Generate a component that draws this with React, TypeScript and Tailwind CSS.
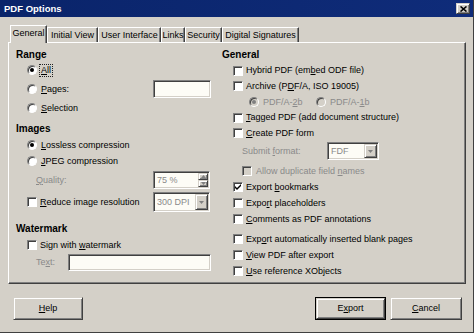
import React from "react";

function Radio({ on, disabled }: { on?: boolean; disabled?: boolean }) {
  return (
    <span
      className={`inline-flex w-[10px] h-[10px] rounded-full shrink-0 items-center justify-center border border-t-[#808080] border-l-[#808080] border-r-white border-b-white shadow-[inset_1px_1px_0_#404040] ${
        disabled ? "bg-[#d4d0c8]" : "bg-white"
      }`}
    >
      {on && (
        <span className={`w-[4px] h-[4px] rounded-full ${disabled ? "bg-[#808080]" : "bg-black"}`} />
      )}
    </span>
  );
}

function Check({ on, disabled }: { on?: boolean; disabled?: boolean }) {
  return (
    <span
      className={`inline-flex w-[10px] h-[10px] shrink-0 items-center justify-center border border-t-[#808080] border-l-[#808080] border-r-white border-b-white shadow-[inset_1px_1px_0_#404040] ${
        disabled ? "bg-[#d4d0c8]" : "bg-white"
      }`}
    >
      {on && (
        <svg width="7" height="7" viewBox="0 0 7 7" className="ml-[1px] mt-[1px]">
          <path d="M0 2 L2 4 L6 0 L6 2 L2 6 L0 4 Z" fill="black" />
        </svg>
      )}
    </span>
  );
}

function Arrow({ gray }: { gray?: boolean }) {
  return (
    <svg width="5" height="3" viewBox="0 0 5 3">
      <path d="M0 0 L5 0 L2.5 3 Z" fill={gray ? "#808080" : "black"} />
    </svg>
  );
}

function Raised({ className, children }: { className: string; children?: React.ReactNode }) {
  return (
    <div
      className={`flex items-center justify-center bg-[#d4d0c8] border border-t-[#d4d0c8] border-l-[#d4d0c8] border-r-[#404040] border-b-[#404040] shadow-[inset_1px_1px_0_#ffffff,inset_-1px_-1px_0_#808080] ${className}`}
    >
      {children}
    </div>
  );
}

function Sunken({ className, children }: { className: string; children?: React.ReactNode }) {
  return (
    <div
      className={`flex items-stretch bg-[#fdfcf6] border border-t-[#808080] border-l-[#808080] border-r-white border-b-white shadow-[inset_1px_1px_0_#404040,inset_-1px_-1px_0_#d4d0c8] p-[1px] ${className}`}
    >
      {children}
    </div>
  );
}

function Drop({ className, text }: { className: string; text: string }) {
  return (
    <Sunken className={className}>
      <div className="flex-1 flex items-center pl-[2px] text-[#8a8a8a]">{text}</div>
      <Raised className="w-[13px]">
        <Arrow gray />
      </Raised>
    </Sunken>
  );
}

function Tab({ label, className, active }: { label: string; className: string; active?: boolean }) {
  return (
    <div
      className={`flex items-center justify-center border-t border-l border-r border-t-white border-l-white border-r-[#404040] shadow-[inset_-1px_0_0_#808080] ${
        active ? "relative z-10 h-[18px] mb-[-1px] bg-[#d4d0c8] pb-[2px]" : "h-[15px]"
      } ${className}`}
    >
      {label}
    </div>
  );
}

function Btn({ className, children, def }: { className: string; children: React.ReactNode; def?: boolean }) {
  if (def) {
    return (
      <div className={`border border-black flex ${className}`}>
        <Raised className="flex-1">{children}</Raised>
      </div>
    );
  }
  return <Raised className={className}>{children}</Raised>;
}

export default function App() {
  return (
    <div className="w-[474px] h-[333px] overflow-hidden bg-[#d4d0c8] flex flex-col font-['Liberation_Sans',Arial,sans-serif] text-[9px] leading-none text-black border-r border-b border-r-[#404040] border-b-[#404040]">
      {/* Title bar */}
      <div className="h-[17px] shrink-0 flex items-center pl-[4px] pr-[3px] bg-linear-to-r from-[#0a246a] to-[#0f2c7a]">
        <span className="text-white font-bold text-[9.5px]">PDF Options</span>
        <Raised className="ml-auto w-[14px] h-[11px]">
          <svg width="7" height="6" viewBox="0 0 7 6">
            <path d="M0.5 0.5 L6.5 5.5 M6.5 0.5 L0.5 5.5" stroke="black" strokeWidth="1.6" />
          </svg>
        </Raised>
      </div>

      <div className="flex-1 flex flex-col pl-[8px] pt-[8px]">
        {/* Tabs */}
        <div className="flex items-end h-[17px] ml-[2px]">
          <Tab label="General" className="w-[37px]" active />
          <Tab label="Initial View" className="w-[51px]" />
          <Tab label="User Interface" className="w-[63px]" />
          <Tab label="Links" className="w-[24px]" />
          <Tab label="Security" className="w-[37px]" />
          <Tab label="Digital Signatures" className="w-[77px]" />
        </div>

        {/* Panel */}
        <div className="w-[458px] h-[242px] border border-t-white border-l-white border-r-[#404040] border-b-[#404040] shadow-[inset_-1px_-1px_0_#808080] flex pl-[7px] pt-[5px]">
          {/* Left column */}
          <div className="w-[206px] flex flex-col">
            <div className="h-[14px] flex items-center font-bold text-[10px]">Range</div>
            <div className="h-[16px] flex items-center pl-[11px] gap-[2px]">
              <Radio on />
              <span className="border border-dotted border-[#202020] px-[1px] py-[1px]">
                <u>A</u>ll
              </span>
            </div>
            <div className="h-[18px] mt-[2px] flex items-center pl-[11px]">
              <div className="w-[126px] flex items-center gap-[4px]">
                <Radio />
                <span>
                  <u>P</u>ages:
                </span>
              </div>
              <Sunken className="w-[58px] h-[18px]" />
            </div>
            <div className="h-[16px] mt-[2px] flex items-center pl-[11px] gap-[4px]">
              <Radio />
              <span>
                <u>S</u>election
              </span>
            </div>
            <div className="h-[14px] mt-[6px] flex items-center font-bold text-[10px]">Images</div>
            <div className="h-[16px] mt-[1px] flex items-center pl-[11px] gap-[4px]">
              <Radio on />
              <span>
                <u>L</u>ossless compression
              </span>
            </div>
            <div className="h-[16px] flex items-center pl-[11px] gap-[4px]">
              <Radio />
              <span>
                <u>J</u>PEG compression
              </span>
            </div>
            <div className="h-[18px] mt-[2px] flex items-center pl-[20px]">
              <span className="w-[117px] text-[#8a8a8a]">
                <u>Q</u>uality:
              </span>
              <Sunken className="w-[57px] h-[18px]">
                <div className="flex-1 flex items-center pl-[2px] text-[#8a8a8a]">75 %</div>
                <div className="w-[10px] flex flex-col">
                  <Raised className="flex-1">
                    <svg width="5" height="3" viewBox="0 0 5 3">
                      <path d="M0 3 L5 3 L2.5 0 Z" fill="#808080" />
                    </svg>
                  </Raised>
                  <Raised className="flex-1">
                    <Arrow gray />
                  </Raised>
                </div>
              </Sunken>
            </div>
            <div className="h-[20px] mt-[3px] flex items-center pl-[11px]">
              <div className="w-[126px] flex items-center gap-[3px]">
                <Check />
                <span>
                  <u>R</u>educe image resolution
                </span>
              </div>
              <Drop className="w-[57px] h-[20px]" text="300 DPI" />
            </div>
            <div className="h-[14px] mt-[10px] flex items-center font-bold text-[10px]">Watermark</div>
            <div className="h-[16px] mt-[1px] flex items-center pl-[11px] gap-[3px]">
              <Check />
              <span>
                Sign with <u>w</u>atermark
              </span>
            </div>
            <div className="h-[17px] mt-[1px] flex items-center pl-[20px]">
              <span className="w-[32px] text-[#8a8a8a]">
                Te<u>x</u>t:
              </span>
              <Sunken className="w-[143px] h-[17px]" />
            </div>
          </div>

          {/* Right column */}
          <div className="flex-1 flex flex-col">
            <div className="h-[14px] flex items-center font-bold text-[10px]">General</div>
            <div className="h-[15px] mt-[1px] flex items-center pl-[11px] gap-[3px]">
              <Check />
              <span>
                Hybrid PDF (em<u>b</u>ed ODF file)
              </span>
            </div>
            <div className="h-[16px] flex items-center pl-[11px] gap-[3px]">
              <Check />
              <span>
                Archive (P<u>D</u>F/A, ISO 19005)
              </span>
            </div>
            <div className="h-[16px] flex items-center pl-[27px] text-[#8a8a8a]">
              <div className="w-[67px] flex items-center gap-[4px]">
                <Radio on disabled />
                <span>
                  PDF/A-<u>2</u>b
                </span>
              </div>
              <div className="flex items-center gap-[4px]">
                <Radio disabled />
                <span>
                  PDF/A-<u>1</u>b
                </span>
              </div>
            </div>
            <div className="h-[15px] flex items-center pl-[11px] gap-[3px]">
              <Check />
              <span>
                <u>T</u>agged PDF (add document structure)
              </span>
            </div>
            <div className="h-[16px] flex items-center pl-[11px] gap-[3px]">
              <Check />
              <span>
                <u>C</u>reate PDF form
              </span>
            </div>
            <div className="h-[18px] mt-[1px] flex items-center pl-[20px]">
              <span className="w-[85px] text-[#8a8a8a]">
                Submit <u>f</u>ormat:
              </span>
              <Drop className="w-[52px] h-[18px]" text="FDF" />
            </div>
            <div className="h-[16px] mt-[3px] flex items-center pl-[20px] gap-[4px] text-[#8a8a8a]">
              <Check disabled />
              <span>
                Allow duplicate field <u>n</u>ames
              </span>
            </div>
            <div className="h-[16px] flex items-center pl-[11px] gap-[3px]">
              <Check on />
              <span>
                Export <u>b</u>ookmarks
              </span>
            </div>
            <div className="h-[16px] flex items-center pl-[11px] gap-[3px]">
              <Check />
              <span>
                Expo<u>r</u>t placeholders
              </span>
            </div>
            <div className="h-[16px] flex items-center pl-[11px] gap-[3px]">
              <Check />
              <span>
                <u>C</u>omments as PDF annotations
              </span>
            </div>
            <div className="h-[16px] mt-[4px] flex items-center pl-[11px] gap-[3px]">
              <Check />
              <span>
                Exp<u>o</u>rt automatically inserted blank pages
              </span>
            </div>
            <div className="h-[16px] flex items-center pl-[11px] gap-[3px]">
              <Check />
              <span>
                <u>V</u>iew PDF after export
              </span>
            </div>
            <div className="h-[16px] flex items-center pl-[11px] gap-[3px]">
              <Check />
              <span>
                <u>U</u>se reference XObjects
              </span>
            </div>
          </div>
        </div>

        {/* Buttons */}
        <div className="flex items-center mt-[13px] pl-[5px] pr-[11px]">
          <Btn className="w-[70px] h-[23px]">
            <span>
              <u>H</u>elp
            </span>
          </Btn>
          <Btn className="ml-auto w-[71px] h-[23px]" def>
            <span>
              E<u>x</u>port
            </span>
          </Btn>
          <Btn className="ml-[4px] w-[72px] h-[23px]">
            <span>
              <u>C</u>ancel
            </span>
          </Btn>
        </div>
      </div>
    </div>
  );
}
